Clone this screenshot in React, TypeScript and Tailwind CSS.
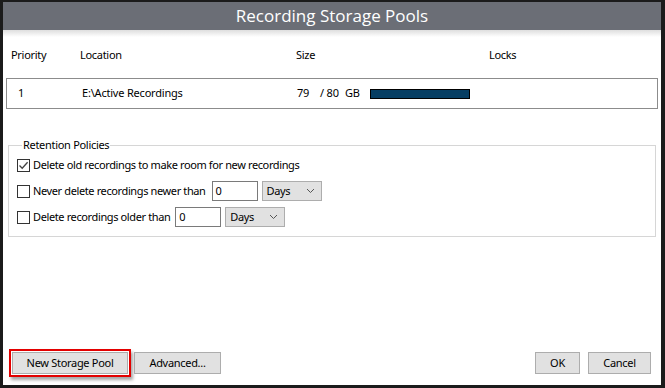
import { useState } from "react"

// Windows-style dialog: storage pools list + retention policies
const FONT = "font-['Noto_Sans',sans-serif]"

function Check({ checked }: { checked?: boolean }) {
  return (
    <span className="w-[13px] h-[13px] border border-[#333333] bg-white flex items-center justify-center shrink-0">
      {checked && (
        <svg width="11" height="11" viewBox="0 0 11 11">
          <path d="M1.5 5.5 L4.2 8.3 L9.6 2.2" fill="none" stroke="#444" strokeWidth="1.3" />
        </svg>
      )}
    </span>
  )
}

function NumBox({ value }: { value: string }) {
  return (
    <div className="w-[46px] h-[20px] border border-[#7a7a7a] bg-white flex items-center pl-[3px] text-[11px] text-black">
      {value}
    </div>
  )
}

function DaysSelect() {
  return (
    <div className="w-[60px] h-[20px] border border-[#adadad] bg-[#e1e1e1] flex items-center justify-between pl-[4px] pr-[6px] text-[11px] text-black">
      <span>Days</span>
      <svg width="9" height="6" viewBox="0 0 9 6">
        <path d="M1 1 L4.5 4.5 L8 1" fill="none" stroke="#555" strokeWidth="1" />
      </svg>
    </div>
  )
}

function Btn({ label, w }: { label: string; w: string }) {
  return (
    <button className={`${w} h-[22px] border border-[#adadad] bg-[#e1e1e1] text-[11px] tracking-[-0.3px] text-black flex items-center justify-center`}>
      {label}
    </button>
  )
}

export default function App() {
  const [used] = useState(79)
  const total = 80

  return (
    <div className={`w-[665px] h-[388px] bg-[#1b1b1b] pt-[2px] pl-[3px] pr-[4px] pb-[3px] ${FONT}`}>
      <div className="w-full h-full bg-white flex flex-col">
        {/* Title bar */}
        <div className="h-[28px] bg-[#6b6e76] flex items-center justify-center text-white text-[17px] font-['Open_Sans',sans-serif] shrink-0">
          Recording Storage Pools
        </div>
        <div className="h-[7px] bg-gradient-to-b from-[#dedede] to-white shrink-0" />

        {/* Column headers */}
        <div className="flex items-center pl-[8px] mt-[10px] h-[16px] text-[11px] tracking-[-0.3px] text-black">
          <div className="w-[69px]">Priority</div>
          <div className="w-[216px]">Location</div>
          <div className="w-[193px]">Size</div>
          <div>Locks</div>
        </div>

        {/* Pool row */}
        <div className="mx-[3px] mt-[15px] h-[31px] border border-[#8c8c8c] flex items-center text-[11px] tracking-[-0.2px] text-black">
          <div className="w-[75px] pl-[11px]">1</div>
          <div className="w-[215px]">E:\Active Recordings</div>
          <div className="flex items-center">
            <span className="w-[23px]">{used}</span>
            <span className="w-[25px]">/ {total}</span>
            <span className="w-[25px]">GB</span>
            <div className="w-[100px] h-[10px] border border-black bg-[#063e63]">
              <div className="h-full bg-[#063e63]" style={{ width: `${(used / total) * 100}%` }} />
            </div>
          </div>
        </div>

        {/* Retention policies */}
        <fieldset className="mx-[5px] mt-[29px] h-[99px] border border-[#d6d6d6] pl-[8px] pr-[8px] pb-[8px] text-[11px] tracking-[-0.38px] text-black">
          <legend className="ml-[5px] px-[1px] text-[11px] tracking-[-0.3px] leading-[14px]">Retention Policies</legend>
          <div className="flex flex-col gap-[6px] mt-[4px]">
            <div className="flex items-center gap-[3px] h-[19px]">
              <Check checked />
              <span>Delete old recordings to make room for new recordings</span>
            </div>
            <div className="flex items-center h-[20px]">
              <Check />
              <span className="ml-[3px] mr-[6px]">Never delete recordings newer than</span>
              <NumBox value="0" />
              <div className="ml-[4px]">
                <DaysSelect />
              </div>
            </div>
            <div className="flex items-center h-[20px]">
              <Check />
              <span className="ml-[3px] mr-[5px]">Delete recordings older than</span>
              <NumBox value="0" />
              <div className="ml-[4px]">
                <DaysSelect />
              </div>
            </div>
          </div>
        </fieldset>

        {/* Footer buttons */}
        <div className="mt-auto mb-[8px] flex items-center pl-[6px] pr-[10px]">
          <div className="border-2 border-[#e30000] p-[1px] shadow-[2px_3px_3px_rgba(0,0,0,0.35)]">
            <Btn label="New Storage Pool" w="w-[116px]" />
          </div>
          <div className="ml-[3px]">
            <Btn label="Advanced..." w="w-[87px]" />
          </div>
          <div className="ml-auto flex gap-[8px]">
            <Btn label="OK" w="w-[45px]" />
            <Btn label="Cancel" w="w-[63px]" />
          </div>
        </div>
      </div>
    </div>
  )
}
